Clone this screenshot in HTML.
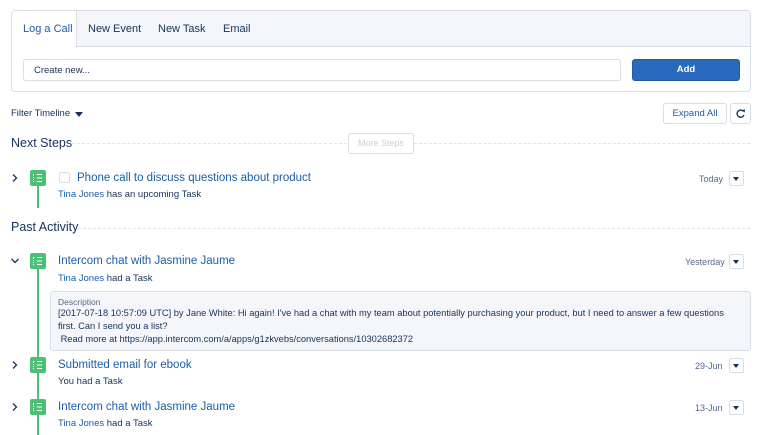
<!DOCTYPE html>
<html><head><meta charset="utf-8"><style>
*{box-sizing:border-box;margin:0;padding:0}
body{width:764px;height:430px;background:#fff;font-family:"Liberation Sans",sans-serif;color:#16325c;position:relative;overflow:hidden}
.a{position:absolute;white-space:nowrap}
.card{left:11px;top:10px;width:740px;height:82px;border:1px solid #d8dde6;border-radius:4px;overflow:hidden}
.tabs{left:0;top:0;width:738px;height:36px;background:#f4f6f9;border-bottom:1px solid #d8dde6}
.tab{font-size:11px;top:12px;color:#16325c}
.inp{left:23px;top:59px;width:598px;height:22px;border:1px solid #d8dde6;border-radius:3px;font-size:9.5px;padding:5px 10px;color:#16325c}
.add{left:632px;top:59px;width:108px;height:22px;background:#2a6abc;border:1px solid #1f5aa6;border-radius:3px;color:#fff;font-size:9.5px;font-weight:bold;text-align:center;line-height:20px}
.btn{border:1px solid #d8dde6;border-radius:3px;background:#fff}
.h{font-size:12.5px;color:#16325c}
.dot{border-top:1px dashed #dfe3ea;height:0}
.ic{width:16px;height:16px;background:#4bc076;border-radius:2px}
.vl{width:2px;background:#4bc076;left:37px}
.t{font-size:11.5px;color:#1b5daa}
.s{font-size:9.5px;color:#16325c}
.s b{font-weight:normal;color:#1b5daa}
.d{font-size:9px;color:#54698d}
.dd{width:15px;height:15px;border:1px solid #d8dde6;border-radius:2px;background:#fff}
.dd:after{content:"";position:absolute;left:3px;top:5px;border-left:3.5px solid transparent;border-right:3.5px solid transparent;border-top:4px solid #16325c}
.ic:after{content:"";position:absolute;left:4px;top:4px;width:8px;height:8px;background:linear-gradient(#fff 0 1.2px,transparent 1.2px 3.4px,#fff 3.4px 4.6px,transparent 4.6px 6.8px,#fff 6.8px 8px);clip-path:polygon(35% 0,100% 0,100% 100%,35% 100%)}
.ic:before{content:"";position:absolute;left:3px;top:4px;width:2px;height:8px;border-left:1px dotted #fff}
</style></head><body>
<div class="a card">
 <div class="a tabs"></div>
 <div class="a" style="left:0;top:0;width:65px;height:37px;background:#fff;border-right:1px solid #d8dde6"></div>
 <div class="a tab" style="left:11px;color:#1b5daa">Log a Call</div>
 <div class="a tab" style="left:76px">New Event</div>
 <div class="a tab" style="left:146px">New Task</div>
 <div class="a tab" style="left:211px">Email</div>
</div>
<div class="a inp">Create new...</div>
<div class="a add">Add</div>

<div class="a" style="left:11px;top:108px;font-size:9.5px">Filter Timeline</div>
<div class="a" style="left:75px;top:112px;border-left:4px solid transparent;border-right:4px solid transparent;border-top:5px solid #16325c"></div>
<div class="a btn" style="left:663px;top:103px;width:64px;height:21px;font-size:9.5px;color:#1b5daa;text-align:center;line-height:19px">Expand All</div>
<div class="a btn" style="left:730px;top:103px;width:21px;height:21px">
<svg width="19" height="19" viewBox="0 0 19 19" style="position:absolute;left:0;top:0"><path d="M12.3 7.2A3.6 3.6 0 1 0 13 11" fill="none" stroke="#16325c" stroke-width="1.4"/><path d="M10.8 6.2l3.2-.8-.3 3.2z" fill="#16325c"/></svg></div>

<div class="a h" style="left:11px;top:136px">Next Steps</div>
<div class="a dot" style="left:72px;top:143px;width:275px"></div>
<div class="a btn" style="left:348px;top:133px;width:66px;height:21px;font-size:9px;color:#c9d0da;text-align:center;line-height:19px">More Steps</div>
<div class="a dot" style="left:414px;top:143px;width:336px"></div>

<svg class="a" style="left:10px;top:173px" width="10" height="10"><path d="M3 1.5l3.5 3.5L3 8.5" fill="none" stroke="#16325c" stroke-width="1.3"/></svg>
<div class="a ic" style="left:30px;top:170px"></div>
<div class="a vl" style="top:186px;height:22px"></div>
<div class="a" style="left:59px;top:172px;width:11px;height:11px;border:1px solid #d8dde6;border-radius:2px"></div>
<div class="a t" style="left:77px;top:172px">Phone call to discuss questions about product</div>
<div class="a s" style="left:58px;top:189px"><b>Tina Jones</b> has an upcoming Task</div>
<div class="a d" style="left:699px;top:174px">Today</div>
<div class="a dd" style="left:729px;top:171px"></div>

<div class="a h" style="left:11px;top:220px">Past Activity</div>
<div class="a dot" style="left:78px;top:228px;width:672px"></div>

<svg class="a" style="left:10px;top:256px" width="10" height="10"><path d="M1.5 3l3.5 3.5L8.5 3" fill="none" stroke="#16325c" stroke-width="1.3"/></svg>
<div class="a ic" style="left:30px;top:253px"></div>
<div class="a vl" style="top:269px;height:88px"></div>
<div class="a t" style="left:58px;top:255px">Intercom chat with Jasmine Jaume</div>
<div class="a s" style="left:58px;top:273px"><b>Tina Jones</b> had a Task</div>
<div class="a d" style="left:685px;top:257px">Yesterday</div>
<div class="a dd" style="left:729px;top:254px"></div>
<div class="a" style="left:50px;top:291px;width:701px;height:60px;background:#f4f6f9;border:1px solid #d8dde6;border-radius:3px"></div>
<div class="a" style="left:58px;top:297px;font-size:8.5px;color:#54698d">Description</div>
<div class="a" style="left:58px;top:308px;font-size:9.3px">[2017-07-18 10:57:09 UTC] by Jane White: Hi again! I've had a chat with my team about potentially purchasing your product, but I need to answer a few questions</div>
<div class="a" style="left:58px;top:321px;font-size:9.3px">first. Can I send you a list?</div>
<div class="a" style="left:58px;top:334px;font-size:9.3px">&nbsp;Read more at https://app.intercom.com/a/apps/g1zkvebs/conversations/10302682372</div>

<svg class="a" style="left:10px;top:360px" width="10" height="10"><path d="M3 1.5l3.5 3.5L3 8.5" fill="none" stroke="#16325c" stroke-width="1.3"/></svg>
<div class="a ic" style="left:30px;top:357px"></div>
<div class="a vl" style="top:373px;height:26px"></div>
<div class="a t" style="left:58px;top:359px">Submitted email for ebook</div>
<div class="a s" style="left:58px;top:376px">You had a Task</div>
<div class="a d" style="left:695px;top:361px">29-Jun</div>
<div class="a dd" style="left:729px;top:358px"></div>

<svg class="a" style="left:10px;top:402px" width="10" height="10"><path d="M3 1.5l3.5 3.5L3 8.5" fill="none" stroke="#16325c" stroke-width="1.3"/></svg>
<div class="a ic" style="left:30px;top:399px"></div>
<div class="a vl" style="top:415px;height:20px"></div>
<div class="a t" style="left:58px;top:401px">Intercom chat with Jasmine Jaume</div>
<div class="a s" style="left:58px;top:418px"><b>Tina Jones</b> had a Task</div>
<div class="a d" style="left:695px;top:403px">13-Jun</div>
<div class="a dd" style="left:729px;top:400px"></div>
</body></html>
